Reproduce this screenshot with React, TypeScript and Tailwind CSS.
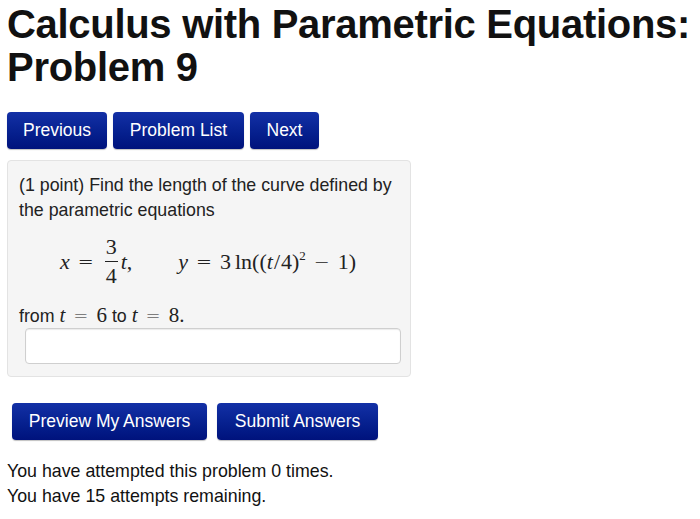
const sans = { fontFamily: '"Liberation Sans", Arial, sans-serif' };
const serif = { fontFamily: '"Liberation Serif", "DejaVu Serif", serif' };
const opFont = { fontFamily: '"DejaVu Sans", sans-serif' };

function NavButton({ label, className = '' }: { label: string; className?: string }) {
  return (
    <button
      className={`h-[37px] rounded-[4px] bg-gradient-to-b from-[#1330a6] to-[#00127c] text-white text-[17.5px] shadow-[0_1px_1px_rgba(0,0,0,0.25)] ${className}`}
    >
      {label}
    </button>
  );
}

function Frac({ num, den }: { num: string; den: string }) {
  return (
    <span className="inline-flex flex-col items-center mx-[3px] leading-none">
      <span className="pb-[3px]">{num}</span>
      <span className="border-t border-[#222] w-[13px]" />
      <span className="pt-[3px]">{den}</span>
    </span>
  );
}

function Op({ c, size = 'text-[19px]' }: { c: string; size?: string }) {
  return (
    <span className={`mx-[8px] font-light ${size}`} style={opFont}>
      {c}
    </span>
  );
}

export default function App() {
  return (
    <div className="w-[700px] h-[519px] overflow-hidden bg-white text-[#111] px-[7px]" style={sans}>
      <h1 className="text-[40px] font-bold leading-[43px] pt-[3px] whitespace-nowrap tracking-[-0.3px]">
        Calculus with Parametric Equations:
        <br />
        Problem 9
      </h1>

      <div className="flex gap-[6px] mt-[23px]">
        <NavButton label="Previous" className="w-[100px]" />
        <NavButton label="Problem List" className="w-[131px]" />
        <NavButton label="Next" className="w-[69px]" />
      </div>

      <div className="mt-[11px] w-[404px] h-[217px] rounded-[4px] border border-[#e3e3e3] bg-[#f5f5f5] pl-[11px] pr-[10px] pt-[12px] text-[17.8px] text-[#222]">
        <p className="leading-[25px]">
          (1 point) Find the length of the curve defined by the parametric equations
        </p>

        <div className="flex items-center h-[60px] mt-[8px] pl-[41px] text-[22px]" style={serif}>
          <span className="italic">x</span>
          <Op c="=" />
          <Frac num="3" den="4" />
          <span className="italic">t</span>
          <span>,</span>
          <span className="ml-[46px] italic">y</span>
          <Op c="=" />
          <span className="mr-[4px]">3</span>
          <span>ln((</span>
          <span className="italic">t</span>
          <span className="mx-[1px]">/</span>
          <span>4)</span>
          <sup className="text-[13px] -top-[5px]">2</sup>
          <Op c="−" />
          <span>1)</span>
        </div>

        <p className="leading-[22px] mt-[13px]">
          from{' '}
          <span style={serif} className="text-[21px]">
            <span className="italic">t</span>
            <Op c="=" size="text-[18px]" />6
          </span>{' '}
          to{' '}
          <span style={serif} className="text-[21px]">
            <span className="italic">t</span>
            <Op c="=" size="text-[18px]" />8.
          </span>
        </p>

        <div className="mt-[1px] ml-[6px] w-[376px] h-[36px] rounded-[4px] border border-[#cfcfcf] bg-white shadow-[inset_0_1px_1px_rgba(0,0,0,0.08)]" />
      </div>

      <div className="flex gap-[10px] mt-[26px] ml-[5px]">
        <NavButton label="Preview My Answers" className="w-[195px]" />
        <NavButton label="Submit Answers" className="w-[161px]" />
      </div>

      <div className="mt-[19px] text-[17.8px] leading-[25px] text-[#111]">
        <p>You have attempted this problem 0 times.</p>
        <p>You have 15 attempts remaining.</p>
      </div>
    </div>
  );
}
